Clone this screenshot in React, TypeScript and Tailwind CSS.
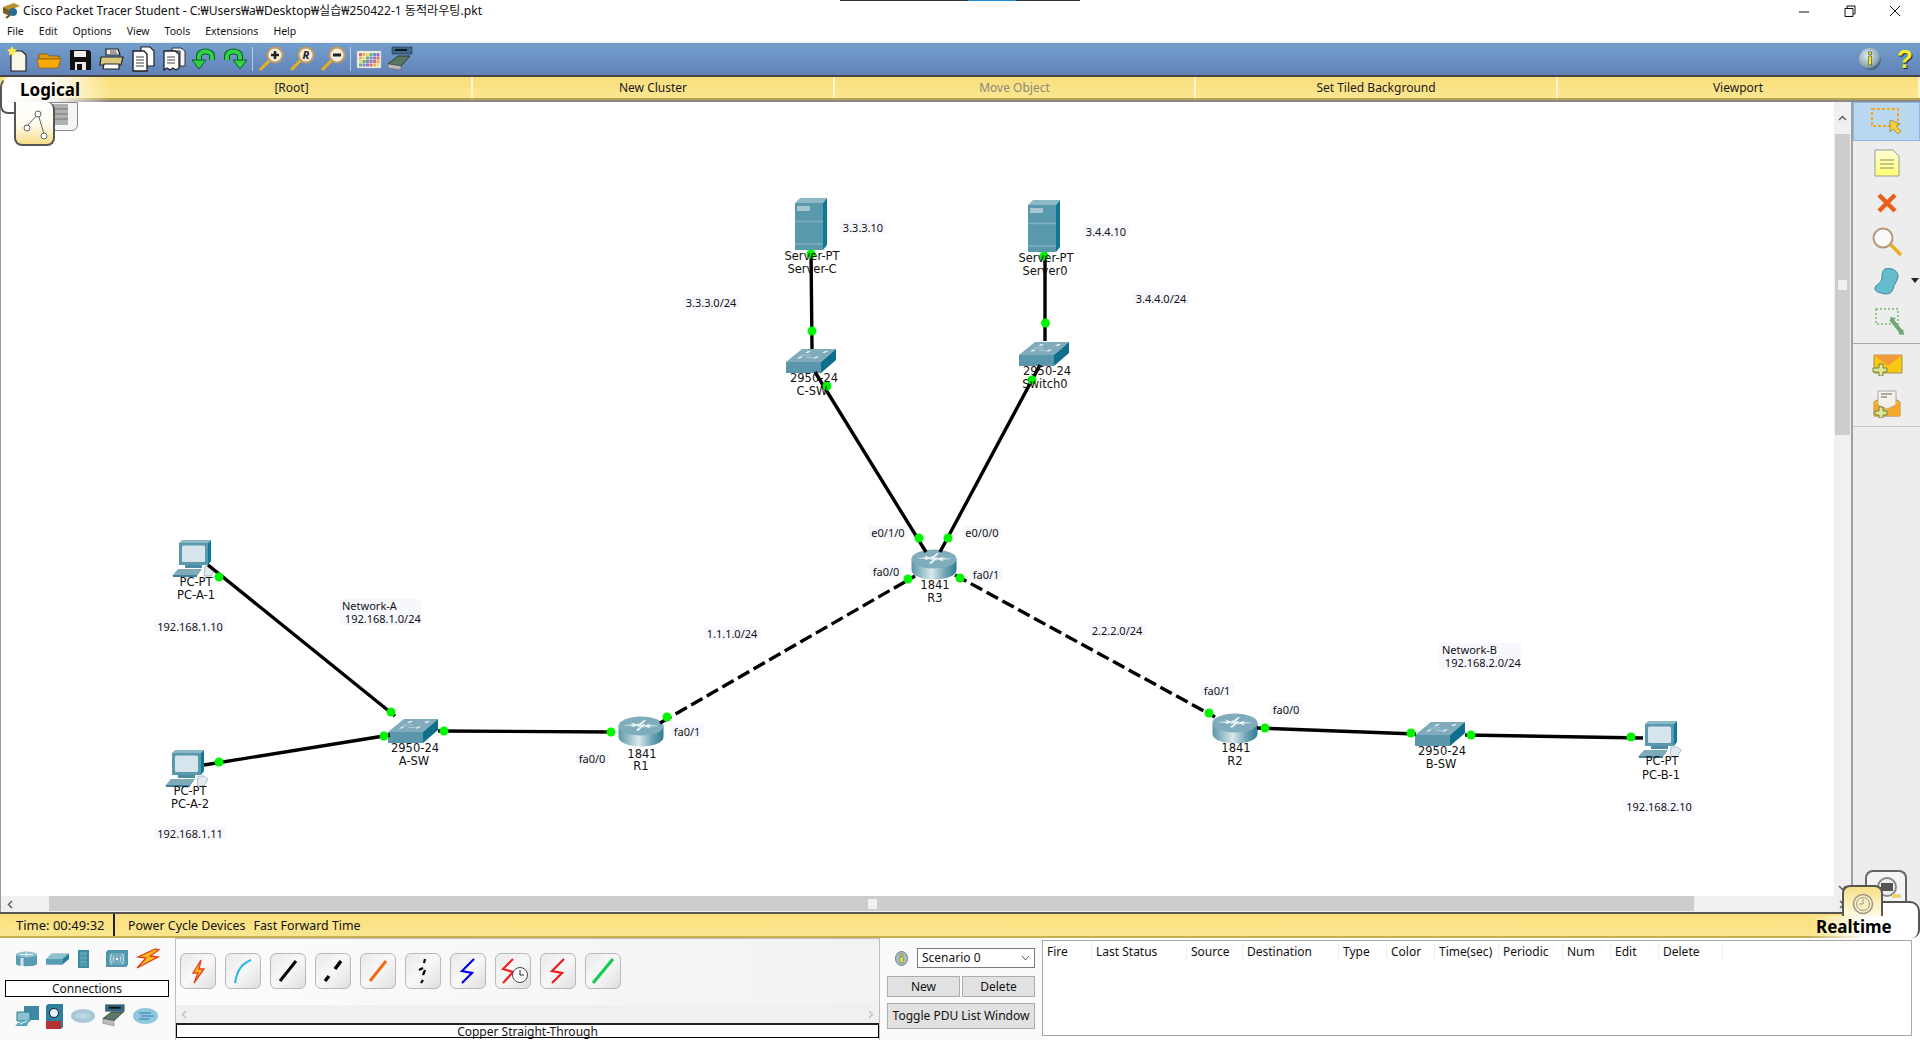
import React from "react";

const Router = ({ x, y }: { x: number; y: number }) => (
  <svg x={x} y={y} width="46" height="31" viewBox="0 0 46 31">
    <defs>
      <linearGradient id="rb" x1="0" x2="1" y1="0" y2="0">
        <stop offset="0" stopColor="#5c96a9" />
        <stop offset="0.45" stopColor="#d9e8ec" />
        <stop offset="0.75" stopColor="#6ea3b4" />
        <stop offset="1" stopColor="#2f7a92" />
      </linearGradient>
    </defs>
    <path d="M0.5 10V21C0.5 26.5 10.5 30.5 23 30.5S45.5 26.5 45.5 21V10Z" fill="url(#rb)" />
    <ellipse cx="23" cy="10" rx="22.5" ry="9.5" fill="#80adbb" />
    <path d="M5 9l10-.5-2-2 8 2.5-8 2.5 2-1.5zM41 10l-10 .5 2 2-8-2.5 8-2.500-2 1.500zM20 15l5-4.500 1 1.500 1-4-6 1.500 2 .5-5 4zM26 4l-5 4-1-1-1 4 6-1.500-2-.5 5-4.500z" fill="#eef5f7" />
  </svg>
);

const Switch = ({ x, y }: { x: number; y: number }) => (
  <svg x={x} y={y} width="51" height="25" viewBox="0 0 51 25">
    <path d="M0 14L16 1H50L35 14Z" fill="#7fabba" />
    <path d="M0 14H35V25H0Z" fill="#5b97ac" />
    <path d="M35 14L50 1V12L35 25Z" fill="#0e6f8b" />
    <path d="M11 10.500l3-2h3l-3 2zM27 10.500l3-2h3l-3 2zM19 5l3-2h3l-3 2zM36 5l3-2h3l-3 2z" fill="#e8f1f4" />
    <path d="M15 7h10M20 9.500h9" stroke="#a8c8d2" strokeWidth="1" />
  </svg>
);

const Server = ({ x, y }: { x: number; y: number }) => (
  <svg x={x} y={y} width="33" height="52" viewBox="0 0 33 52">
    <path d="M0 5L5 0H32L28 5Z" fill="#8db8c6" />
    <path d="M0 5H28V52H0Z" fill="#5a98ae" />
    <path d="M28 5L32 0V47L28 52Z" fill="#0f7993" />
    <path d="M2 8H15V13H2Z" fill="#a5c7d2" />
    <path d="M0 23.500H28M0 46H28" stroke="#7fb0bf" strokeWidth="1.500" />
  </svg>
);

const Pc = ({ x, y }: { x: number; y: number }) => (
  <svg x={x} y={y} width="45" height="38" viewBox="0 0 45 38">
    <path d="M7 4L10 1H39L36 4Z" fill="#8db8c6" />
    <path d="M36 4L39 1V22L36 26Z" fill="#0f7993" />
    <path d="M7 4H36V26H7Z" fill="#5a98ae" />
    <rect x="10" y="6.500" width="23" height="16.500" rx="1.500" fill="#d6e5ec" />
    <path d="M13 26H30V29H13Z" fill="#4d8da3" />
    <path d="M6 30H30L25 37H0Z" fill="#7eaaba" />
    <path d="M1 36H25V38H1Z" fill="#3f8199" />
    <path d="M33 27h6l4 3-4 7h-7z" fill="#dfe9ee" stroke="#8faab5" strokeWidth=".7" />
  </svg>
);

const Bg = "bg-[#f7f8fd]";
type L = [string, number, number];
const labels: L[] = [
  ["Server-PT", 811, 256], ["Server-C", 811, 269], ["2950-24", 813, 378], ["C-SW", 811, 391],
  ["Server-PT", 1045, 258], ["Server0", 1044, 271], ["2950-24", 1046, 371], ["Switch0", 1044, 384],
  ["1841", 934, 585], ["R3", 934, 598], ["1841", 641, 754], ["R1", 640, 766], ["1841", 1235, 748], ["R2", 1234, 761],
  ["2950-24", 414, 748], ["A-SW", 413, 761], ["2950-24", 1441, 751], ["B-SW", 1440, 764],
  ["PC-PT", 195, 582], ["PC-A-1", 195, 595], ["PC-PT", 189, 791], ["PC-A-2", 189, 804], ["PC-PT", 1661, 761], ["PC-B-1", 1660, 775],
];
const notes: L[] = [
  ["3.3.3.10", 862, 228], ["3.4.4.10", 1105, 232], ["3.3.3.0/24", 710, 303], ["3.4.4.0/24", 1160, 299],
  ["e0/1/0", 887, 533], ["e0/0/0", 981, 533], ["fa0/0", 885, 572], ["fa0/1", 985, 575], ["fa0/1", 686, 732], ["fa0/0", 591, 759],
  ["1.1.1.0/24", 731, 634], ["2.2.2.0/24", 1116, 631], ["fa0/1", 1216, 691], ["fa0/0", 1285, 710],
  ["192.168.1.10", 189, 627], ["192.168.1.11", 189, 834], ["192.168.2.10", 1658, 807],
];
const dots = [
  [811, 254], [812, 331], [1044, 256], [1045.5, 323], [827, 386], [1032, 380], [919, 538], [948, 538], [908, 579], [960, 578],
  [611, 732], [667, 717], [1209, 713], [1265, 728], [1411, 733], [1471, 735], [1631, 737], [219, 577], [391, 712], [219, 762], [384, 736], [444, 731],
];

function Canvas() {
  return (
    <div className="relative flex-1 bg-white overflow-hidden border-l border-[#9a9a9a]">
      <svg className="absolute left-[-1px] top-0" width="1834" height="796" viewBox="0 102 1834 796">
        <Server x={795} y={198} />
        <Server x={1028} y={200} />
        <Switch x={786} y={348} />
        <Switch x={1019} y={341} />
        <Router x={911} y={549} />
        <Router x={618} y={716} />
        <Router x={1212} y={713} />
        <Switch x={388} y={718} />
        <Switch x={1415} y={721} />
        <Pc x={172} y={539} />
        <Pc x={165} y={749} />
        <Pc x={1638} y={720} />
        <g stroke="#000" strokeWidth="3.400" fill="none">
          <path d="M811 250L812 349M1045 252V341M815 372L926 552M1040 365L940 552M208 565L395 716M204 765L390 735M438 731L615 732M1257 728L1416 734M1465 735L1643 738" />
          <path d="M660 723L915 576M955 575L1215 717" strokeDasharray="13 5" />
        </g>
        {dots.map(([x, y], i) => (
          <circle key={i} cx={x} cy={y} r="4.500" fill="#00f500" />
        ))}
      </svg>
      {notes.map(([t, x, y], i) => (
        <div key={i} className={`absolute -translate-x-1/2 -translate-y-1/2 whitespace-nowrap px-[3px] leading-[13px] text-[11px] text-[#111] ${Bg}`} style={{ left: x, top: y - 103 }}>
          {t}
        </div>
      ))}
      {labels.map(([t, x, y], i) => (
        <div key={i} className="absolute -translate-x-1/2 -translate-y-1/2 whitespace-nowrap font-['DejaVu_Sans',sans-serif] leading-[13px] text-[11.5px] text-[#111]" style={{ left: x, top: y - 102 }}>
          {t}
        </div>
      ))}
      <div className={`absolute left-[338px] top-[497px] h-[26px] w-[82px] pl-[3px] text-[11px] leading-[13px] text-[#111] ${Bg}`}>
        Network-A
        <br />
        &nbsp;192.168.1.0/24
      </div>
      <div className={`absolute left-[1438px] top-[541px] h-[26px] w-[82px] pl-[3px] text-[11px] leading-[13px] text-[#111] ${Bg}`}>
        Network-B
        <br />
        &nbsp;192.168.2.0/24
      </div>
    </div>
  );
}

const VScroll = () => (
  <div className="relative flex w-[17px] flex-col bg-[#f0f0f0] px-px">
    <div className="flex h-[32px] items-center justify-center">
      <svg width="9" height="6" viewBox="0 0 9 6"><path d="M1 5L4.500 1.500L8 5" fill="none" stroke="#606060" strokeWidth="1.500" /></svg>
    </div>
    <div className="flex h-[301px] items-center justify-center bg-[#cdcdcd]">
      <div className="h-[10px] w-[9px] bg-[#f0f0f0]" />
    </div>
    <div className="flex-1" />
    <div className="flex h-[16px] items-center justify-center">
      <svg width="9" height="6" viewBox="0 0 9 6"><path d="M1 1L4.500 4.500L8 1" fill="none" stroke="#606060" strokeWidth="1.500" /></svg>
    </div>
  </div>
);

const HScroll = () => (
  <div className="flex h-[16px] items-stretch bg-[#f0f0f0] border-l border-[#9a9a9a]">
    <div className="flex w-[48px] items-center pl-[6px]">
      <svg width="6" height="9" viewBox="0 0 6 9"><path d="M5 1L1.500 4.500L5 8" fill="none" stroke="#606060" strokeWidth="1.500" /></svg>
    </div>
    <div className="flex w-[1645px] items-center bg-[#cdcdcd] pl-[819px] border-b border-[#f0f0f0]">
      <div className="h-[10px] w-[9px] bg-[#f0f0f0]" />
    </div>
    <div className="flex flex-1 items-center justify-end pr-[6px]">
      <svg width="6" height="9" viewBox="0 0 6 9"><path d="M1 1L4.500 4.500L1 8" fill="none" stroke="#606060" strokeWidth="1.500" /></svg>
    </div>
  </div>
);

const Ic = ({ w = 26, h = 26, vb = "0 0 26 26", children }: { w?: number; h?: number; vb?: string; children: React.ReactNode }) => (
  <svg width={w} height={h} viewBox={vb}>{children}</svg>
);

const Lens = ({ inner }: { inner: React.ReactNode }) => (
  <Ic>
    <path d="M2 24L12 14" stroke="#e8b020" strokeWidth="3" />
    <circle cx="17" cy="9" r="7.500" fill="#f4eee0" stroke="#c49a60" strokeWidth="2" />
    {inner}
  </Ic>
);

const tools: React.ReactNode[] = [
  <Ic key="new"><path d="M6 5H17L21 9V25H6Z" fill="#fbf7e8" stroke="#222" strokeWidth="1.200" /><path d="M7 0l1.500 3 3.500.5-2.500 2.500.5 3.500-3-1.500-3 1.500.5-3.500L2 3.500 5.500 3Z" fill="#ffe94a" /></Ic>,
  <Ic key="open"><path d="M3 8H11L13 10H23V13H3Z" fill="#e29a10" stroke="#704a00" strokeWidth=".7" /><path d="M3 22L1 13H25L22 22Z" fill="#f9a80c" stroke="#8a5a00" strokeWidth=".7" /></Ic>,
  <Ic key="save"><path d="M3 4H22L24 6V24H3Z" fill="#111" /><path d="M7 5H19V11H7Z" fill="#eee" /><path d="M8 16H19V24H8Z" fill="#e8e8e8" /><path d="M10 18H15V24H10Z" fill="#111" /></Ic>,
  <Ic key="print"><path d="M8 3H20L22 9H8Z" fill="#e8e8e0" stroke="#222" strokeWidth="1.200" /><path d="M3 11H25L23 19H2Z" fill="#d8c880" stroke="#222" strokeWidth="1.200" /><path d="M6 18H21V23H5Z" fill="#fff" stroke="#222" strokeWidth="1.200" /><path d="M12 5h6M12 7h7" stroke="#555" /></Ic>,
  <Ic key="copy"><path d="M12 1H21L25 5V20H12Z" fill="#fff" stroke="#222" strokeWidth="1.200" /><path d="M4 5H15L18 8V25H4Z" fill="#fff" stroke="#222" strokeWidth="1.400" /><path d="M7 11H15M7 14H15M7 17H15M7 20H15" stroke="#444" /></Ic>,
  <Ic key="paste"><path d="M12 2H21L25 5V20H20V5H12Z" fill="#f4f4f4" stroke="#333" strokeWidth="1" /><path d="M4 5H15L19 8V22L16 24L13 22L10 24L7 22L4 24Z" fill="#fff" stroke="#222" strokeWidth="1.300" /><path d="M7 11H15M7 14H15M7 17H15" stroke="#444" /></Ic>,
  <Ic key="undo"><path d="M8 15V10C8 4 21 4 21 10V14" fill="none" stroke="#0a5d2a" strokeWidth="6" /><path d="M8 15V10C8 4 21 4 21 10V14" fill="none" stroke="#31d047" strokeWidth="4" /><path d="M1 14H15L8 23Z" fill="#31d047" stroke="#0a5d2a" /></Ic>,
  <Ic key="redo"><path d="M5 14V10C5 4 18 4 18 10V15" fill="none" stroke="#0a5d2a" strokeWidth="6" /><path d="M5 14V10C5 4 18 4 18 10V15" fill="none" stroke="#31d047" strokeWidth="4" /><path d="M11 14H25L18 23Z" fill="#31d047" stroke="#0a5d2a" /></Ic>,
  null,
  <Lens key="zi" inner={<path d="M13 9h8M17 5v8" stroke="#222" strokeWidth="2.500" />} />,
  <Lens key="zr" inner={<text x="13.500" y="13" fontSize="11" fontWeight="700" fontStyle="italic" fill="#222">R</text>} />,
  <Lens key="zo" inner={<path d="M13 9h8" stroke="#222" strokeWidth="3" />} />,
  null,
  <Ic key="pal"><path d="M1 5H25V22H1Z" fill="#f2f2e8" stroke="#bbb" strokeWidth=".5" />{Array.from({ length: 24 }).map((_, i) => (<rect key={i} x={3 + (i % 6) * 3.5} y={7 + Math.floor(i / 6) * 3.5} width="3" height="3" fill={["#d87070", "#e8b070", "#e0e070", "#70b070", "#7090d0", "#a070c0"][(i + Math.floor(i / 6)) % 6]} />))}</Ic>,
  <Ic key="dev"><path d="M5 1H25V8H5Z" fill="#3a6a8a" stroke="#222" strokeWidth=".5" /><path d="M8 3H20V5H8Z" fill="#111" /><path d="M1 18L11 10H23L14 20Z" fill="#557a5e" stroke="#333" /><path d="M1 18L14 20V24L1 22Z" fill="#bbb" stroke="#555" strokeWidth=".5" /></Ic>,
];

function Toolbar() {
  return (
    <div className="flex h-[32px] items-center bg-gradient-to-b from-[#739fcc] to-[#6282b8] pl-[2px]">
      {tools.map((t, i) =>
        t === null ? (
          <div key={i} className="flex h-[32px] w-[5px] items-center justify-center"><div className="h-[24px] w-px bg-[#b8cbe0]" /></div>
        ) : (
          <div key={i} className="flex w-[31px] justify-center">{t}</div>
        )
      )}
      <div className="flex-1" />
      <svg width="24" height="24" viewBox="0 0 24 24" className="mr-[15px]">
        <defs>
          <radialGradient id="inf" cx=".4" cy=".35" r=".7"><stop offset="0" stopColor="#e4ecf0" /><stop offset=".7" stopColor="#8fa6b4" /><stop offset="1" stopColor="#2d4660" /></radialGradient>
        </defs>
        <circle cx="12" cy="12" r="11" fill="url(#inf)" />
        <path d="M10.500 9H13.500V18H10.500ZM10.500 5H13.500V7.500H10.500Z" fill="#f2ee20" stroke="#222" strokeWidth=".5" />
      </svg>
      <div className="mr-[7px] w-[16px] text-[26px] font-bold leading-none text-[#f0ee30] [text-shadow:1px_1px_0_#222] font-['Liberation_Sans',sans-serif]">?</div>
    </div>
  );
}

const YellowBar = () => (
  <div className="relative flex h-[25px] border-b-2 border-b-[#b9a24e] bg-gradient-to-b from-[#f9df7c] to-[#fbe690] border-t-2 border-t-[#454545] pl-[112px] text-[12px] text-[#1a1a1a]">
    {([["[Root]", 0], ["New Cluster", 0], ["Move Object", 1], ["Set Tiled Background", 0], ["Viewport", 0]] as [string, number][]).map(([t, d], i) => (
      <div key={i} className={`flex items-center justify-center border-r-2 border-r-[#fff6d0] pt-[1px] ${i === 0 ? "w-[361px]" : i === 2 ? "w-[361px]" : "w-[362px]"} ${d ? "text-[#8a8a78]" : ""} ${i === 4 ? "border-r-0" : ""}`}>
        {t}
      </div>
    ))}
  </div>
);

const Note = () => (
  <svg width="26" height="28" viewBox="0 0 26 28"><defs><linearGradient id="nt" x1="0" y1="0" x2="0" y2="1"><stop offset="0" stopColor="#ffffd8" /><stop offset="1" stopColor="#ffff70" /></linearGradient></defs><path d="M1 1H19L25 7V27H1Z" fill="url(#nt)" stroke="#999" /><path d="M6 11H20M6 15H20M6 19H20" stroke="#8a8a70" /></svg>
);
const Env = ({ open }: { open?: boolean }) =>
  open ? (
    <svg width="30" height="28" viewBox="0 0 30 28"><path d="M2 12L15 4L28 12V26H2Z" fill="#f8c020" stroke="#b08030" /><path d="M6 1H24V15L15 19L6 15Z" fill="#f6f2e8" stroke="#aaa" /><path d="M9 4H20M9 7H15" stroke="#aaa" strokeWidth="2" /><path d="M2 12L15 21L28 12V26H2Z" fill="#f5a828" /><path d="M7 17h4v4h4v4h-4v3H7v-3H3v-4h4z" fill="#dde89a" stroke="#778040" /></svg>
  ) : (
    <svg width="32" height="22" viewBox="0 0 32 22"><path d="M3 1H31V19H3Z" fill="#f9c810" stroke="#aa9050" /><path d="M3 1L17 12L31 1Z" fill="#f09a3a" /><path d="M8 10h4v4h4v4h-4v4H8v-4H2v-4h6z" fill="#dde89a" stroke="#778040" /></svg>
  );

function RightPanel() {
  return (
    <div className="flex w-[69px] flex-col bg-[#ededed] border-l-2 border-l-[#9f9f9f]">
      <div className="flex h-[39px] items-center justify-center border border-[#8ab8e4] bg-[#b9d7ef]">
        <svg width="32" height="27" viewBox="0 0 32 27"><rect x="1" y="1" width="26" height="17" fill="none" stroke="#f7a51e" strokeWidth="2" strokeDasharray="3 2" /><path d="M19 12L19 24L22 21L27 26L30 23L25 18L29 16Z" fill="#f7d038" stroke="#8a8040" strokeWidth=".7" /></svg>
      </div>
      <div className="flex h-[36px] items-end justify-center"><Note /></div>
      <div className="flex h-[37px] items-end justify-center pb-[1px]">
        <svg width="20" height="20" viewBox="0 0 20 20"><path d="M2 2L18 18M18 2L2 18" stroke="#e8601c" strokeWidth="4.500" /></svg>
      </div>
      <div className="flex h-[44px] items-end justify-center pb-[1px]">
        <svg width="32" height="30" viewBox="0 0 32 30"><path d="M18 16L30 28" stroke="#e8b020" strokeWidth="3.500" /><circle cx="12" cy="11" r="9.500" fill="#fafafa" stroke="#b89878" strokeWidth="2" /></svg>
      </div>
      <div className="relative flex h-[38px] items-end justify-center pb-[1px]">
        <svg width="26" height="27" viewBox="0 0 26 27"><path d="M11 1C17 -1 25 3 24 9C23 14 20 16 19 21C18 26 12 27 7 25C2 24 -1 21 2 18C5 15 8 14 8 9C8 6 8 3 11 1Z" fill="#64bccc" stroke="#3f8a9c" /></svg>
        <svg className="absolute right-[1px] top-[20px]" width="8" height="5" viewBox="0 0 8 5"><path d="M0 0H8L4 5Z" fill="#222" /></svg>
      </div>
      <div className="flex h-[42px] items-end justify-center pb-[2px] pl-[6px]">
        <svg width="30" height="28" viewBox="0 0 30 28"><rect x="1" y="1" width="22" height="15" fill="none" stroke="#78b868" strokeWidth="1.500" strokeDasharray="2 2" /><path d="M16 11L27 25" stroke="#6aa878" strokeWidth="4" /><path d="M15 9L21 10L16 15ZM29 27L23 26L28 21Z" fill="#6aa878" /></svg>
      </div>
      <div className="mt-[5px] h-px bg-[#a8a8a8]" />
      <div className="flex h-[37px] items-end justify-center pb-[5px]"><Env /></div>
      <div className="flex h-[39px] items-end justify-center pb-[2px]"><Env open /></div>
      <div className="mt-[6px] h-px bg-[#c4c4c4]" />
      <div className="flex-1" />
    </div>
  );
}

const CableBtn = ({ children }: { children: React.ReactNode }) => (
  <div className="flex h-[36px] w-[36px] items-center justify-center rounded-[6px] border border-[#b9b9b9] bg-gradient-to-br from-[#e9e9e9] via-[#f8f8f8] to-[#dedede]">
    <svg width="30" height="30" viewBox="0 0 30 30">{children}</svg>
  </div>
);

const cables: React.ReactNode[] = [
  <path key="a" d="M18 4L10 17H15L11 27L21 13H16Z" fill="#f5b818" stroke="#e8401c" strokeWidth="1.300" />,
  <path key="b" d="M7 27C9 15 13 8 23 4" fill="none" stroke="#29b8ee" strokeWidth="2.200" />,
  <path key="c" d="M7 25L23 5" stroke="#000" strokeWidth="3" />,
  <path key="d" d="M7 25L11 20M17 13L23 5" stroke="#000" strokeWidth="3.500" />,
  <path key="e" d="M7 25L23 5" stroke="#f46a10" strokeWidth="3" />,
  <path key="f" d="M17 3L16 7M11 14L15 12M17 14L15 19M15 24L13 27" stroke="#000" strokeWidth="2.200" />,
  <path key="g" d="M21 3L9 15L19 17L9 27" fill="none" stroke="#0000e8" strokeWidth="2.200" />,
  <g key="h"><path d="M15 3L5 13L15 16L5 27" fill="none" stroke="#f02020" strokeWidth="2.200" /><circle cx="22" cy="19" r="7.500" fill="#fdfdfd" stroke="#444" /><path d="M22 14V19H26" fill="none" stroke="#222" /></g>,
  <path key="i" d="M21 3L9 15L19 17L9 27" fill="none" stroke="#f01818" strokeWidth="2.200" />,
  <path key="j" d="M5 27L25 3" stroke="#12cc50" strokeWidth="3.200" />,
];

function BottomLeft() {
  return (
    <div className="w-[175px] bg-[#fafafa]">
      <div className="flex h-[41px] items-center pl-[15px]">
        <svg width="23" height="16" viewBox="0 0 23 16"><path d="M1 3V13C1 16 22 16 22 13V3Z" fill="#5a9db2" /><ellipse cx="11.500" cy="3.500" rx="10.500" ry="3" fill="#8fc0cd" /><path d="M5 3.500h13M11.500 1.500v4" stroke="#e8f1f4" strokeWidth="1.200" /><path d="M7 7V15" stroke="#cfe4ea" strokeWidth="3" /></svg>
        <svg width="23" height="12" viewBox="0 0 24 12" className="ml-[8px]"><path d="M0 6L6 0H24L17 6Z" fill="#8fc0cd" /><path d="M0 6H17V12H0Z" fill="#5a9db2" /><path d="M17 6L24 0V6L17 12Z" fill="#227f9c" /></svg>
        <svg width="11" height="18" viewBox="0 0 11 18" className="ml-[9px]"><path d="M0 0H11V18H0Z" fill="#3d88a3" /><path d="M2 2H9V16H2Z" fill="#5fa3b8" /><path d="M2 6H9M2 10H9M2 14H9" stroke="#3d88a3" /></svg>
        <svg width="24" height="19" viewBox="0 0 24 19" className="ml-[16px]"><path d="M1 3L3 1H23V16L21 18H1Z" fill="#4f96ad" /><path d="M4 4H20V16H4Z" fill="#6da9bc" /><circle cx="12" cy="10" r="1.200" fill="#fff" /><path d="M9 7C8 9 8 11 9 13M15 7C16 9 16 11 15 13M7 5C5 8 5 12 7 15M17 5C19 8 19 12 17 15" fill="none" stroke="#e2eff3" strokeWidth=".8" /></svg>
        <svg width="25" height="21" viewBox="0 0 25 21" className="ml-[6px]"><path d="M20 1L3 9L11 10L2 20L23 9L15 8L24 2Z" fill="#f9c01c" stroke="#ee3a1a" strokeWidth="1.300" /></svg>
      </div>
      <div className="ml-[5px] mt-px flex h-[17px] w-[164px] items-center justify-center border border-black bg-white text-[12px] text-[#111]">Connections</div>
      <div className="flex h-[37px] items-center pl-[15px] pt-[1px]">
        <svg width="25" height="22" viewBox="0 0 25 22"><path d="M9 1H24V15H9Z" fill="#3d88a3" /><path d="M2 7H15V16H2Z" fill="#8cc0d0" stroke="#2f7a92" /><path d="M3 18L15 14L12 21L0 21Z" fill="#5fa8c0" /><path d="M5 19L12 16" stroke="#dff" /></svg>
        <svg width="17" height="25" viewBox="0 0 17 25" className="ml-[6px]"><path d="M0 2L2 0H17V23L15 25H0Z" fill="#2d7f9c" /><circle cx="8" cy="9" r="4.500" fill="#e8eff2" stroke="#123" /><path d="M0 17H15V25H0Z" fill="#b83030" /></svg>
        <svg width="24" height="14" viewBox="0 0 24 14" className="ml-[8px]"><ellipse cx="12" cy="7" rx="12" ry="7" fill="#a8c8d8" /><path d="M5 5C10 3 17 4 20 7C16 10 8 11 4 8Z" fill="#bcd6e2" /></svg>
        <svg width="24" height="24" viewBox="0 0 28 36" preserveAspectRatio="none" className="ml-[7px]"><path d="M4 1H26V11H4Z" fill="#2f6c8c" stroke="#222" strokeWidth=".5" /><path d="M8 4H22V7H8Z" fill="#111" /><path d="M1 22L11 12H25L14 25Z" fill="#5a7c66" stroke="#333" /><path d="M1 22L14 25V33L1 29Z" fill="#bbb" stroke="#555" strokeWidth=".5" /></svg>
        <svg width="25" height="16" viewBox="0 0 25 16" className="ml-[7px]"><ellipse cx="12.500" cy="8" rx="12.500" ry="8" fill="#8fc8dc" /><path d="M6 5H18M8 8H21M6 11H16" stroke="#4f96c0" strokeWidth="1.500" /></svg>
      </div>
    </div>
  );
}

function BottomMid() {
  return (
    <div className="flex w-[705px] flex-col border-l border-t border-r border-[#bdbdbd]">
      <div className="flex h-[66px] items-start gap-[9px] bg-gradient-to-r from-[#fcfcfc] to-[#f2f2f2] pl-[4px] pt-[14px]">
        {cables.map((c, i) => <CableBtn key={i}>{c}</CableBtn>)}
      </div>
      <div className="flex h-[18px] items-center justify-between bg-[#f0f0f0] px-[5px]">
        <svg width="6" height="9" viewBox="0 0 6 9"><path d="M5 1L1.500 4.500L5 8" fill="none" stroke="#c2c2c2" strokeWidth="1.500" /></svg>
        <svg width="6" height="9" viewBox="0 0 6 9"><path d="M1 1L4.500 4.500L1 8" fill="none" stroke="#c2c2c2" strokeWidth="1.500" /></svg>
      </div>
      <div className="h-[15px] border border-black border-t-2 border-t-[#222] bg-white text-center text-[12px] leading-[13px] text-[#111]">Copper Straight-Through</div>
    </div>
  );
}

function BottomScenario() {
  return (
    <div className="flex w-[162px] flex-col bg-[#fafafa] pl-[7px]">
      <div className="mt-[10px] flex h-[20px] items-center gap-[9px] pl-[8px]">
        <svg width="13" height="15" viewBox="0 0 13 15"><ellipse cx="6.500" cy="7.500" rx="6" ry="7" fill="#a8bcc8" stroke="#6c8494" /><path d="M5 6H8V12H5ZM5 3H8V5H5Z" fill="#f2ee20" stroke="#444" strokeWidth=".4" /></svg>
        <div className="flex h-[20px] w-[118px] items-center justify-between border border-[#7a7a7a] bg-white pl-[4px] pr-[4px] text-[12px]">
          Scenario 0
          <svg width="9" height="6" viewBox="0 0 9 6"><path d="M1 1L4.500 5L8 1" fill="none" stroke="#555" /></svg>
        </div>
      </div>
      <div className="mt-[8px] flex gap-[2px]">
        <div className="flex h-[21px] w-[73px] items-center justify-center border border-[#adadad] bg-[#e1e1e1] text-[12px]">New</div>
        <div className="flex h-[21px] w-[73px] items-center justify-center border border-[#adadad] bg-[#e1e1e1] text-[12px]">Delete</div>
      </div>
      <div className="mt-[6px] flex h-[26px] w-[148px] items-center justify-center border border-[#adadad] bg-[#e1e1e1] text-[12px]">Toggle PDU List Window</div>
    </div>
  );
}

const cols: [string, string][] = [
  ["Fire", "w-[49px]"], ["Last Status", "w-[95px]"], ["Source", "w-[56px]"], ["Destination", "w-[96px]"], ["Type", "w-[48px]"], ["Color", "w-[48px]"],
  ["Time(sec)", "w-[64px]"], ["Periodic", "w-[64px]"], ["Num", "w-[48px]"], ["Edit", "w-[48px]"], ["Delete", "w-[64px]"],
];

const Pdu = () => (
  <div className="mt-[2px] h-[96px] w-[870px] border border-[#a8a8a8] bg-white">
    <div className="flex h-[21px]">
      {cols.map(([t, w], i) => (
        <div key={i} className={`flex items-center border-r border-[#f0f0f0] pl-[4px] text-[12px] text-[#111] ${w}`}>{t}</div>
      ))}
    </div>
  </div>
);

function TabLogical() {
  return (
    <>
      <div className="absolute left-[40px] top-[102px] h-[29px] w-[38px] rounded-br-[6px] border border-[#8a8a8a] bg-[#f4f4f4]">
        <svg width="22" height="24" viewBox="0 0 22 24" className="ml-[8px] mt-[1px]"><rect x="1" y="0" width="18" height="21" fill="#b0b0b0" /><path d="M1 5H19M1 10H19M1 15H19" stroke="#777" /></svg>
      </div>
      <div className="absolute left-0 top-[77px] h-[25px] w-[110px] rounded-tl-[10px] border-l-2 border-t-2 border-[#555] bg-gradient-to-r from-white via-white/90 to-white/0 [border-top-color:transparent]">
        <div className="absolute left-[18px] top-0 text-[17px] font-bold leading-[22px] text-black">Logical</div>
      </div>
      <div className="absolute left-0 top-[102px] h-[12px] w-[45px] rounded-bl-[8px] border-b-2 border-l-2 border-[#555] bg-white" />
      <div className="absolute left-[14px] top-[102px] h-[44px] w-[41px] rounded-b-[8px] rounded-tr-[8px] border-2 border-t-0 border-[#555] bg-gradient-to-b from-white via-[#fffdf0] to-[#f7dd8a] [border-right-color:#555]">
        <svg width="30" height="34" viewBox="0 0 30 34" className="ml-[2px] mt-[6px]">
          <path d="M20 6L9 18M20 6L26 26" stroke="#666" fill="none" />
          <circle cx="20" cy="6" r="3" fill="#fff" stroke="#666" /><circle cx="9" cy="20" r="3" fill="#fff" stroke="#666" /><circle cx="26" cy="28" r="3" fill="#fff" stroke="#666" />
        </svg>
      </div>
    </>
  );
}

function TabRealtime() {
  return (
    <>
      <div className="absolute left-[1865px] top-[870px] h-[34px] w-[42px] rounded-t-[8px] border-2 border-b-0 border-[#666] bg-[#f4f4f4]">
        <svg width="36" height="28" viewBox="0 0 36 28" className="ml-[1px]"><circle cx="19" cy="15" r="9" fill="#eee" stroke="#888" strokeWidth="2" /><rect x="13" y="11" width="12" height="8" fill="#555" /><rect x="24" y="22" width="9" height="4" fill="#e8d870" /></svg>
      </div>
      <div className="absolute left-[1810px] top-[916px] h-[24px] w-[110px] bg-gradient-to-r from-white/0 via-white to-white" />
      <div className="absolute left-[1880px] top-[901px] h-[37px] w-[40px] rounded-tr-[10px] rounded-br-[8px] border-r-2 border-t-2 border-[#555] bg-white" />
      <div className="absolute left-[1842px] top-[885px] h-[31px] w-[41px] rounded-t-[8px] border-2 border-b-0 border-[#555] bg-gradient-to-b from-[#f7df86] to-[#fffbe4] flex justify-center pt-[6px]">
        <svg width="22" height="22" viewBox="0 0 22 22"><circle cx="11" cy="11" r="9.500" fill="#f8ecc0" stroke="#9a9a8a" strokeWidth="1.500" /><circle cx="11" cy="11" r="6.500" fill="none" stroke="#9a9a8a" /><path d="M11 6V11H7" fill="none" stroke="#9a9a8a" /></svg>
      </div>
      <div className="absolute left-[1816px] top-[916px] text-[17px] font-bold leading-[22px] text-black">Realtime</div>
    </>
  );
}

export default function App() {
  return (
    <div className="relative flex h-[1040px] w-[1920px] flex-col overflow-hidden bg-white font-['Noto_Sans','Noto_Sans_CJK_KR',sans-serif] text-[#111]">
      <div className="absolute left-[840px] top-0 h-px w-[240px] bg-[#333]" />
      <div className="absolute left-[968px] top-0 h-px w-[48px] bg-[#1a8ad8]" />
      <div className="flex h-[22px] items-center pl-[2px] text-[12.1px]">
        <svg width="20" height="18" viewBox="0 0 20 18"><path d="M1 5L12 1L18 4L8 8Z" fill="#b89030" /><path d="M1 5L8 8V14L1 11Z" fill="#7a5c20" /><circle cx="11" cy="10" r="4" fill="#2a6a90" /><path d="M4 16L8 13" stroke="#6a4a20" strokeWidth="2" /></svg>
        <span className="ml-[1px]">Cisco Packet Tracer Student - C:₩Users₩a₩Desktop₩실습₩250422-1 동적라우팅.pkt</span>
        <div className="flex-1" />
        <svg width="116" height="14" viewBox="0 0 116 14" className="mr-[5px]">
          <path d="M0 8H10" stroke="#111" />
          <path d="M46 4.500H54V12.500H46ZM48 4V2H56V10H54.500" fill="none" stroke="#111" />
          <path d="M91 2L101 12M101 2L91 12" stroke="#111" />
        </svg>
      </div>
      <div className="flex h-[20px] items-center gap-[15px] pl-[7px] text-[10.5px]">
        {["File", "Edit", "Options", "View", "Tools", "Extensions", "Help"].map((m) => <span key={m}>{m}</span>)}
      </div>
      <div className="h-px bg-[#ececec]" />
      <Toolbar />
      <YellowBar />
      <div className="flex h-[812px] border-t-2 border-[#8a8a8a]">
        <div className="flex w-[1851px] flex-col">
          <div className="flex h-[795px]">
            <Canvas />
            <VScroll />
          </div>
          <HScroll />
        </div>
        <RightPanel />
      </div>
      <div className="flex h-[26px] items-stretch border-t-2 border-t-[#555] border-b-2 border-b-[#c8b050] bg-gradient-to-b from-[#f9df7c] to-[#fbe690] text-[12.4px]">
        <div className="flex w-[115px] items-center border-r-2 border-[#222] pl-[16px] pt-[2px] text-[13px]">Time: 00:49:32</div>
        <div className="flex items-center gap-[8px] pl-[13px] pt-[2px]"><span>Power Cycle Devices</span><span>Fast Forward Time</span></div>
      </div>
      <div className="flex flex-1">
        <BottomLeft />
        <BottomMid />
        <BottomScenario />
        <Pdu />
      </div>
      <TabLogical />
      <TabRealtime />
    </div>
  );
}
